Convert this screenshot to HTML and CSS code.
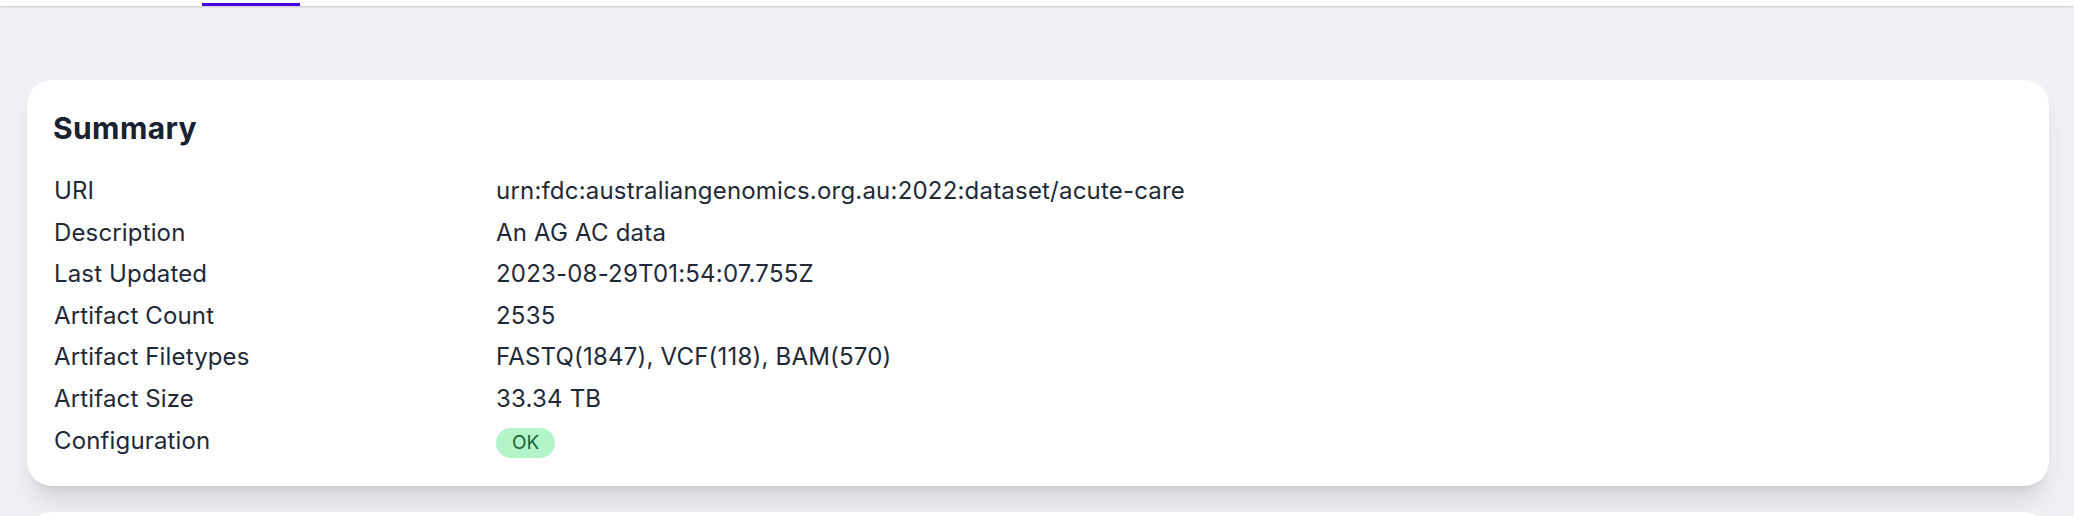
FILE: index.html
```html
<!DOCTYPE html>
<html lang="en">
<head>
<meta charset="utf-8">
<title>Dataset Summary</title>
<link rel="stylesheet" href="styles.css">
</head>
<body>
<header class="topbar">
  <nav class="tabs">
    <span class="tab"></span>
    <span class="tab tab-active"></span>
  </nav>
</header>
<main class="content">
  <section class="card">
    <h2 class="card-title">Summary</h2>
    <dl class="summary">
      <dt>URI</dt><dd>urn:fdc:australiangenomics.org.au:2022:dataset/acute-care</dd>
      <dt>Description</dt><dd>An AG AC data</dd>
      <dt>Last Updated</dt><dd>2023-08-29T01:54:07.755Z</dd>
      <dt>Artifact Count</dt><dd>2535</dd>
      <dt>Artifact Filetypes</dt><dd>FASTQ(1847), VCF(118), BAM(570)</dd>
      <dt>Artifact Size</dt><dd>33.34 TB</dd>
      <dt>Configuration</dt><dd><span class="badge badge-ok">OK</span></dd>
    </dl>
  </section>
  <section class="card card-next"></section>
</main>
</body>
</html>
```

FILE: styles.css
```css
* { box-sizing: border-box; }
html, body { margin: 0; padding: 0; }
body {
  background: #f0f1f5;
  font-family: Inter, "Noto Sans", "Liberation Sans", sans-serif;
  color: #1f2937;
  overflow: hidden;
}
.topbar {
  height: 6px;
  background: #ffffff;
  box-shadow: 0 1px 3px rgba(0,0,0,0.12), 0 1px 2px rgba(0,0,0,0.06);
  position: relative;
  z-index: 1;
}
.tabs {
  display: flex;
  height: 100%;
  padding-left: 202px;
}
.tab { width: 0; }
.tab-active {
  width: 98px;
  height: 100%;
  border-bottom: 3px solid #4a00e0;
}
.content {
  padding: 74px 25px 0 27px;
  display: flex;
  flex-direction: column;
  gap: 26px;
}
.card {
  background: #ffffff;
  border-radius: 25px;
  box-shadow: 0 20px 25px -5px rgba(0,0,0,0.10), 0 8px 10px -6px rgba(0,0,0,0.10);
  padding: 29px 26px 25px 26px;
}
.card-title {
  margin: 0;
  font-size: 30px;
  line-height: 38px;
  font-weight: 700;
  color: #1a2130;
  letter-spacing: 0.4px;
}
.summary {
  margin: 23px 0 0 0;
  display: grid;
  grid-template-columns: 442px 1fr;
  font-size: 24px;
  line-height: 41.6px;
}
.summary dt, .summary dd {
  margin: 0;
  padding-left: 1px;
}
.summary dt {
  letter-spacing: 0.15px;
}
.summary dd {
  letter-spacing: 0.2px;
}
.badge {
  display: inline-block;
  vertical-align: middle;
  height: 30px;
  line-height: 30px;
  padding: 0 16px;
  border-radius: 15px;
  font-size: 19px;
  letter-spacing: 0;
  margin-top: 2px;
}
.badge-ok {
  background: #b3f5c8;
  color: #166534;
}
.card-next {
  height: 120px;
}
```
